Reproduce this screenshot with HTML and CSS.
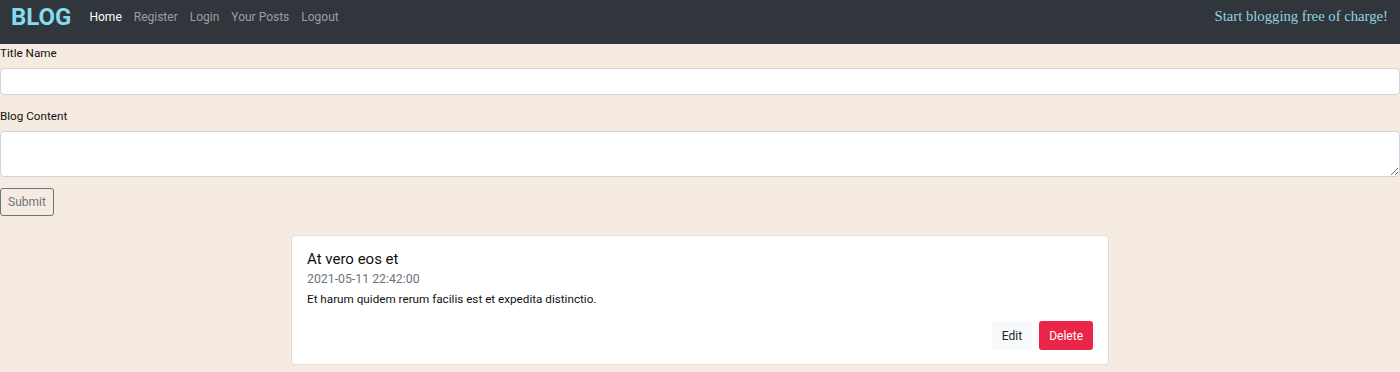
FILE: index.html
```html
<!DOCTYPE html>
<html lang="en">
<head>
<meta charset="UTF-8">
<meta name="viewport" content="width=device-width, initial-scale=1.0">
<title>Blog</title>
<link rel="stylesheet" href="styles.css">
</head>
<body>

<nav class="navbar">
    <div class="nav-left">
        <a class="brand" href="#">BLOG</a>
        <ul class="nav-links">
            <li><a class="active" href="#">Home</a></li>
            <li><a href="#">Register</a></li>
            <li><a href="#">Login</a></li>
            <li><a href="#">Your Posts</a></li>
            <li><a href="#">Logout</a></li>
        </ul>
    </div>
    <span class="tagline">Start blogging free of charge!</span>
</nav>

<form class="post-form">
    <label for="title">Title Name</label>
    <input type="text" id="title" class="field">
    <label for="content">Blog Content</label>
    <textarea id="content" class="field area"></textarea>
    <button type="button" class="btn-submit">Submit</button>
</form>

<div class="posts">
    <div class="card">
        <h5 class="card-title">At vero eos et</h5>
        <h6 class="card-date">2021-05-11 22:42:00</h6>
        <p class="card-text">Et harum quidem rerum facilis est et expedita distinctio.</p>
        <div class="card-actions">
            <button class="btn btn-light">Edit</button>
            <button class="btn btn-danger">Delete</button>
        </div>
    </div>
</div>

</body>
</html>
```

FILE: styles.css
```css
/* Global styles */
body {
    font-family: Roboto, "Liberation Sans", sans-serif;
    font-size: 11.7px;
    color: #212529;
    background-color: #f5ebe1;
    margin: 0;
    padding: 0;
}
.navbar {
    background-color: #31363d;
    height: 44px;
    display: flex;
    justify-content: space-between;
    align-items: flex-start;
    padding: 0 12px 0 11px;
}
.nav-left {
    display: flex;
    align-items: center;
    gap: 18px;
    height: 33px;
}
.brand {
    color: #84dcef;
    font-size: 24px;
    font-weight: 700;
    text-decoration: none;
}
.nav-links {
    display: flex;
    list-style: none;
    margin: 0;
    padding: 0;
    gap: 12px;
}
.nav-links a {
    color: #9a9ea2;
    text-decoration: none;
    font-size: 12px;
}
.nav-links a.active {
    color: #fff;
}
.tagline {
    font-family: "Liberation Serif", serif;
    color: #8fd3e0;
    font-size: 14.7px;
    line-height: 33px;
}
.post-form {
    display: flex;
    flex-direction: column;
    align-items: flex-start;
}
.post-form label {
    line-height: 18px;
    margin-bottom: 6px;
    color: #111;
}
.field {
    width: 100%;
    box-sizing: border-box;
    border: 1px solid #ced4da;
    border-radius: 4px;
    background: #fff;
    height: 27px;
    margin: 0 0 12px;
    font: inherit;
}
.area {
    height: 46px;
    margin-bottom: 11px;
}
.btn-submit {
    font: inherit;
    font-size: 12px;
    color: #6c757d;
    background: transparent;
    border: 1px solid #6c757d;
    border-radius: 3px;
    padding: 0 7px;
    height: 28px;
}
.posts {
    display: flex;
    justify-content: center;
    padding-top: 19px;
}
.card {
    width: 818px;
    box-sizing: border-box;
    background: #fff;
    border: 1px solid #dcdcdc;
    border-radius: 4px;
    padding: 14px 15px 14px;
}
.card-title {
    font-size: 15px;
    font-weight: 400;
    color: #111;
    margin: 0 0 4px;
}
.card-date {
    font-size: 12.3px;
    font-weight: 400;
    color: #6c757d;
    margin: 0 0 6px;
}
.card-text {
    margin: 1px 0 15px;
    color: #111;
}
.card-actions {
    display: flex;
    justify-content: flex-end;
    gap: 7px;
}
.btn {
    font: inherit;
    font-size: 12px;
    border: 1px solid transparent;
    border-radius: 3px;
    height: 29px;
    padding: 0 9px;
}
.btn-light {
    background: #f8f9fa;
    color: #212529;
}
.btn-danger {
    background: #eb2548;
    color: #fff;
}
```
